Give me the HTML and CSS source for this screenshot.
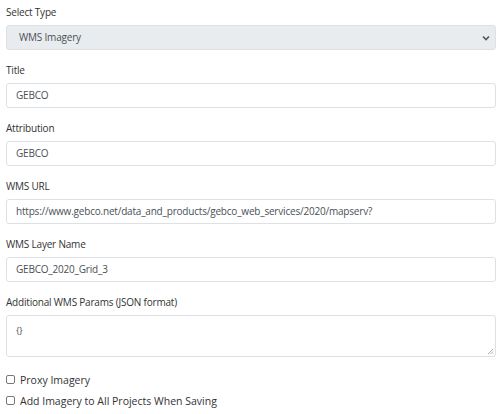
FILE: index.html
```html
<!DOCTYPE html>
<html lang="en">
<head>
  <meta charset="UTF-8">
  <meta name="viewport" content="width=device-width, initial-scale=1.0">
  <title>Imagery Settings</title>
  <link rel="stylesheet" href="styles.css">
</head>
<body>
  <form class="imagery-form">
    <div class="form-group">
      <label class="form-label">Select Type</label>
      <div class="select-wrap">
        <div class="form-control form-select">WMS Imagery</div>
        <svg class="chevron" width="8" height="6" viewBox="0 0 8 6"><path d="M1 1.5 L4 4.5 L7 1.5" fill="none" stroke="#555" stroke-width="1.6"/></svg>
      </div>
    </div>
    <div class="form-group">
      <label class="form-label">Title</label>
      <div class="form-control">GEBCO</div>
    </div>
    <div class="form-group">
      <label class="form-label">Attribution</label>
      <div class="form-control">GEBCO</div>
    </div>
    <div class="form-group">
      <label class="form-label">WMS URL</label>
      <div class="form-control">https://www.gebco.net/data_and_products/gebco_web_services/2020/mapserv?</div>
    </div>
    <div class="form-group">
      <label class="form-label">WMS Layer Name</label>
      <div class="form-control">GEBCO_2020_Grid_3</div>
    </div>
    <div class="form-group">
      <label class="form-label">Additional WMS Params (JSON format)</label>
      <div class="form-control textarea">{}
        <svg class="grip" width="7" height="7" viewBox="0 0 7 7"><path d="M6 1 L1 6 M6 3.5 L3.5 6 M6 5.5 L5.5 6" stroke="#999" stroke-width="0.8"/></svg>
      </div>
    </div>
    <div class="check-row"><span class="check-box"></span>Proxy Imagery</div>
    <div class="check-row"><span class="check-box"></span>Add Imagery to All Projects When Saving</div>
  </form>
</body>
</html>
```

FILE: styles.css
```css
body {
    margin: 0;
    padding: 4px 4px 0 6px;
    font-family: "Open Sans", Arial, sans-serif;
    font-size: 10px;
    letter-spacing: -0.2px;
    color: #333;
    background: #fff;
}

.form-group {
    margin-bottom: 12px;
}

.form-label {
    display: block;
    line-height: 16px;
    margin-bottom: 5px;
}

.form-control {
    box-sizing: border-box;
    height: 25px;
    line-height: 23px;
    padding: 0 9px;
    border: 1px solid #dde1e5;
    border-radius: 3px;
    color: #495057;
    background: #fff;
    white-space: nowrap;
    overflow: hidden;
}

.select-wrap {
    position: relative;
}

.form-select {
    background: #e9ecef;
    padding-left: 12px;
}

.chevron {
    position: absolute;
    right: 6px;
    top: 10px;
}

.textarea {
    position: relative;
    height: 42px;
    line-height: 20px;
    padding-top: 5px;
    font-size: 9px;
}

.grip {
    position: absolute;
    right: 1px;
    bottom: 1px;
}

.check-row {
    display: flex;
    align-items: center;
    height: 21px;
    font-size: 10.5px;
    letter-spacing: 0;
    color: #333;
}

.check-box {
    box-sizing: border-box;
    width: 9px;
    height: 9px;
    border: 1px solid #777;
    border-radius: 2px;
    margin-right: 5px;
}
```
